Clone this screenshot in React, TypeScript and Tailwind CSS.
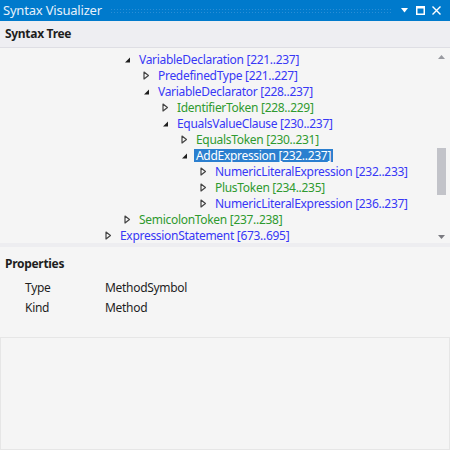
import React from "react";

type Row = { label: string; range: string; level: number; kind: "node" | "token"; expanded: boolean; selected?: boolean };

const rows: Row[] = [
  { label: "VariableDeclaration", range: "[221..237]", level: 1, kind: "node", expanded: true },
  { label: "PredefinedType", range: "[221..227]", level: 2, kind: "node", expanded: false },
  { label: "VariableDeclarator", range: "[228..237]", level: 2, kind: "node", expanded: true },
  { label: "IdentifierToken", range: "[228..229]", level: 3, kind: "token", expanded: false },
  { label: "EqualsValueClause", range: "[230..237]", level: 3, kind: "node", expanded: true },
  { label: "EqualsToken", range: "[230..231]", level: 4, kind: "token", expanded: false },
  { label: "AddExpression", range: "[232..237]", level: 4, kind: "node", expanded: true, selected: true },
  { label: "NumericLiteralExpression", range: "[232..233]", level: 5, kind: "node", expanded: false },
  { label: "PlusToken", range: "[234..235]", level: 5, kind: "token", expanded: false },
  { label: "NumericLiteralExpression", range: "[236..237]", level: 5, kind: "node", expanded: false },
  { label: "SemicolonToken", range: "[237..238]", level: 1, kind: "token", expanded: false },
  { label: "ExpressionStatement", range: "[673..695]", level: 0, kind: "node", expanded: false },
];

const indent: Record<number, string> = {
  0: "pl-[105px]",
  1: "pl-[124px]",
  2: "pl-[143px]",
  3: "pl-[162px]",
  4: "pl-[181px]",
  5: "pl-[200px]",
};

function Collapsed() {
  return (
    <svg width="7" height="9" viewBox="0 0 7 9" className="block">
      <path d="M1 1 L5.5 4.5 L1 8 Z" fill="none" stroke="#444" strokeWidth="1.2" strokeLinejoin="round" />
    </svg>
  );
}

function Expanded() {
  return (
    <svg width="7" height="9" viewBox="0 0 7 9" className="block">
      <path d="M6 2.5 L6 7.5 L1 7.5 Z" fill="#1e1e1e" />
    </svg>
  );
}

export default function App() {
  const font = { fontFamily: '"Noto Sans", "Open Sans", sans-serif' };
  return (
    <div className="w-[450px] h-[450px] overflow-hidden flex flex-col bg-[#f5f5f5] text-[12px] tracking-[-0.3px] text-[#1e1e1e]" style={font}>
      {/* Title bar */}
      <div className="h-[21px] bg-[#007acc] flex items-center shrink-0">
        <span className="pl-[3px] text-[13px] tracking-[-0.2px] text-[#e6f1fb] leading-none">Syntax Visualizer</span>
        <div className="ml-[8px] flex-1 h-[5px] bg-[radial-gradient(circle,#2a8ed6_0.8px,transparent_1px)] bg-[length:3px_3px]" />
        <div className="flex items-center pl-[5px] pr-[6px]">
          <div className="w-[16px] flex justify-center">
            <svg width="7" height="5" viewBox="0 0 7 5"><path d="M0 0 L7 0 L3.5 4.5 Z" fill="#fff" /></svg>
          </div>
          <div className="w-[16px] flex justify-center">
            <svg width="9" height="9" viewBox="0 0 9 9"><rect x="0.75" y="0.75" width="7.5" height="7.5" fill="none" stroke="#fff" strokeWidth="1.5" /><rect x="0" y="0" width="9" height="2.5" fill="#fff" /></svg>
          </div>
          <div className="w-[16px] flex justify-center">
            <svg width="9" height="9" viewBox="0 0 9 9"><path d="M0.5 0.5 L8.5 8.5 M8.5 0.5 L0.5 8.5" stroke="#fff" strokeWidth="1.4" /></svg>
          </div>
        </div>
      </div>

      {/* Syntax tree header */}
      <div className="h-[27px] shrink-0 bg-[#eeeef2] border-b border-[#dedee4] flex items-center pl-[5px] font-bold text-[12px]">
        Syntax Tree
      </div>

      {/* Tree */}
      <div className="h-[195px] shrink-0 flex relative overflow-hidden">
        <div className="flex-1 pt-[3px] flex flex-col">
          {rows.map((r, i) => (
            <div key={i} className={`h-[16px] flex items-center ${indent[r.level]}`}>
              <div className="w-[13px] flex items-center shrink-0">{r.expanded ? <Expanded /> : <Collapsed />}</div>
              <span
                className={
                  r.selected
                    ? "px-[2px] leading-[13px] bg-[#2b7fcf] text-white whitespace-nowrap"
                    : r.kind === "node"
                    ? "px-[2px] leading-[13px] text-[#3838f5] whitespace-nowrap"
                    : "px-[2px] leading-[13px] text-[#2f9a2f] whitespace-nowrap"
                }
              >
                {r.label} {r.range}
              </span>
            </div>
          ))}
        </div>
        {/* Scrollbar */}
        <div className="w-[17px] shrink-0 flex flex-col items-center">
          <div className="h-[16px] flex items-center justify-center pt-[1px]">
            <svg width="7" height="4" viewBox="0 0 7 4"><path d="M0 4 L7 4 L3.5 0 Z" fill="#999aa0" /></svg>
          </div>
          <div className="flex-1 w-full flex flex-col items-center">
            <div className="mt-[84px] w-[9px] h-[47px] bg-[#c2c3c9]" />
          </div>
          <div className="h-[8px] flex items-start justify-center">
            <svg width="7" height="4" viewBox="0 0 7 4"><path d="M0 0 L7 0 L3.5 4 Z" fill="#7a7a80" /></svg>
          </div>
        </div>
      </div>

      {/* Splitter */}
      <div className="h-[4px] shrink-0 bg-[#ededf0]" />

      {/* Properties */}
      <div className="h-[90px] shrink-0 flex flex-col">
        <div className="pl-[5px] pt-[9px] font-bold leading-[16px]">Properties</div>
        <div className="mt-[6px] flex flex-col">
          <div className="h-[20px] flex items-center">
            <span className="pl-[25px] w-[105px]">Type</span>
            <span>MethodSymbol</span>
          </div>
          <div className="h-[20px] flex items-center">
            <span className="pl-[25px] w-[105px]">Kind</span>
            <span>Method</span>
          </div>
        </div>
      </div>

      {/* Bottom box */}
      <div className="flex-1 border border-[#e6e6e6] bg-[#f5f5f5]" />
    </div>
  );
}
